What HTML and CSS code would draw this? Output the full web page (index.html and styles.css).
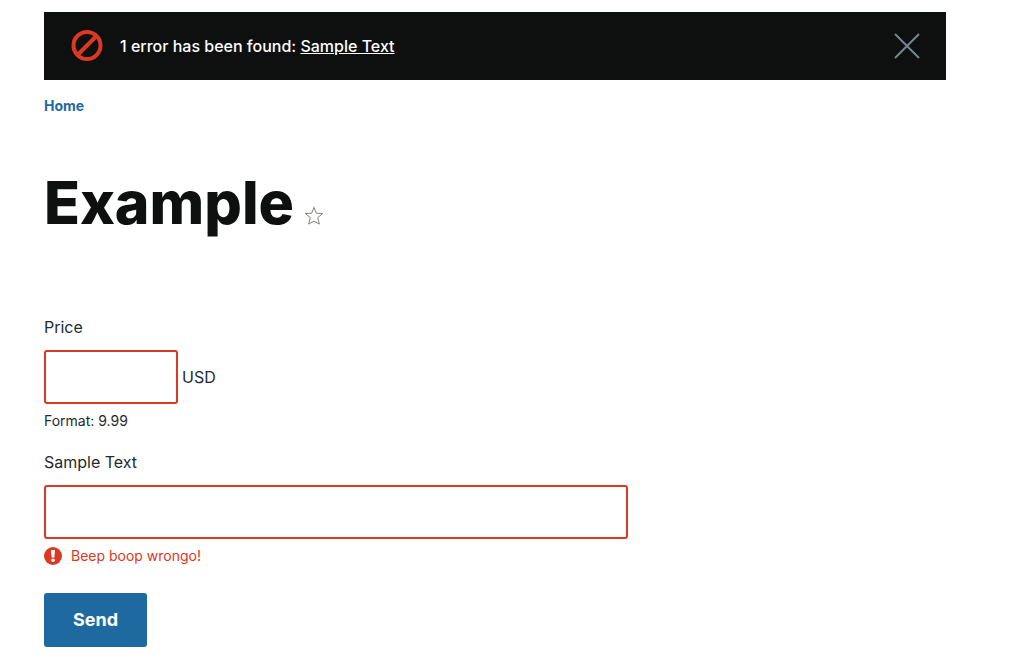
FILE: index.html
```html
<!DOCTYPE html>
<html lang="en">
<head>
  <meta charset="UTF-8">
  <meta name="viewport" content="width=device-width, initial-scale=1.0">
  <title>Example</title>
  <link rel="stylesheet" href="styles.css">
</head>
<body>
<div class="page">
  <div class="messages" role="alert">
    <svg width="32" height="32" viewBox="0 0 32 32" fill="none" stroke="#dc3823" stroke-width="4" aria-hidden="true">
      <circle cx="16" cy="15.5" r="13.5"/>
      <path d="M6.5 25l19-19"/>
    </svg>
    <p class="messages-text">1 error has been found: <a href="#sample-text">Sample Text</a></p>
    <button type="button" aria-label="Close">
      <svg width="26" height="26" viewBox="0 0 26 26" fill="none" stroke="#758591" stroke-width="2" aria-hidden="true">
        <path d="M1 1l24 24M25 1L1 25"/>
      </svg>
    </button>
  </div>

  <nav class="breadcrumb">
    <a href="#">Home</a>
  </nav>

  <div class="page-header">
    <h1>Example</h1>
    <button type="button" class="shortcut" aria-label="Add to shortcuts">
      <svg width="20" height="20" viewBox="0 0 20 20" fill="#fff" stroke="#85857b" stroke-width="1" stroke-linejoin="round" aria-hidden="true">
        <path d="M10 1.3l2.3 5.9 6.3.4-4.9 4 1.7 6.5L10 15.1l-5.4 3 1.7-6.5-4.9-4 6.3-.4z"/>
      </svg>
    </button>
  </div>

  <form>
    <div class="form-item">
      <label for="price">Price</label>
      <div class="price-row">
        <input type="text" id="price" class="field field-price" aria-invalid="true" aria-describedby="price-format">
        <span>USD</span>
      </div>
      <p class="description" id="price-format">Format: 9.99</p>
    </div>

    <div class="form-item">
      <label for="sample-text">Sample Text</label>
      <input type="text" id="sample-text" class="field field-text" aria-invalid="true" aria-describedby="sample-error">
      <p class="description error" id="sample-error">
        <svg width="18" height="18" viewBox="0 0 18 18" aria-hidden="true">
          <circle cx="9" cy="9" r="9" fill="#dc3823"/>
          <path d="M7 3h4l-.6 7.5H7.6z" fill="#fff"/>
          <circle cx="9" cy="13.2" r="1.8" fill="#fff"/>
        </svg>
        Beep boop wrongo!
      </p>
    </div>

    <button type="submit" class="btn">Send</button>
  </form>
</div>
</body>
</html>
```
FILE: styles.css
```css
* { margin: 0; padding: 0; box-sizing: border-box; }
body {
  font-family: Metropolis, Inter, "Liberation Sans", sans-serif;
  font-size: 16px;
  line-height: 24px;
  color: #232b2f;
  background: #fff;
}
.page {
  max-width: 990px;
  padding: 12px 44px 16px;
}
button, input { font: inherit; }
button { border: none; background: none; cursor: pointer; }
svg { display: block; flex: none; }

.messages {
  display: flex;
  align-items: center;
  padding: 18px 26px 18px 27px;
  background: #0d100f;
  color: #fff;
  font-weight: 500;
}
.messages-text { flex: 1; margin-left: 17px; }
.messages a { color: #fff; }

.breadcrumb {
  margin-top: 16px;
  font-size: 14px;
  line-height: 20px;
  font-weight: 700;
}
.breadcrumb a { color: #1f69a1; text-decoration: none; }

.page-header {
  display: flex;
  align-items: center;
  gap: 10px;
  margin: 51px 0 76px;
}
h1 {
  font-size: 59px;
  line-height: 72px;
  font-weight: 800;
  color: #0d100f;
}
.shortcut { margin-top: 26px; }

.form-item { margin-bottom: 19px; }
label { display: block; margin-bottom: 11px; }
.price-row {
  display: flex;
  align-items: center;
  gap: 4px;
}
.field {
  display: block;
  width: 100%;
  height: 54px;
  padding: 0 16px;
  border: 2px solid #dc3823;
  border-radius: 3px;
  background: #fff;
}
.field-price { width: 134px; }
.field-text { max-width: 584px; }
.description {
  margin-top: 7px;
  font-size: 14px;
  line-height: 20px;
}
.error {
  display: flex;
  align-items: center;
  gap: 9px;
  color: #dc3823;
}

.btn {
  margin-top: 8px;
  padding: 15px 29px;
  border-radius: 3px;
  background: #1f69a1;
  color: #fff;
  font-size: 18px;
  font-weight: 700;
}
```
